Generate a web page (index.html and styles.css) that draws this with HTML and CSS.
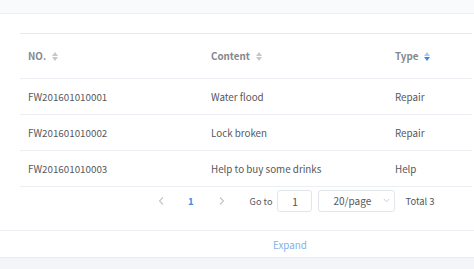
FILE: index.html
```html
<!DOCTYPE html>
<html>
<head>
<meta charset="utf-8">
<link rel="stylesheet" href="styles.css">
</head>
<body>
<div class="topband"></div>
<div class="card">
  <div class="table">
    <div class="row head">
      <div class="cell">NO. <span class="sort"><i class="up"></i><i class="down"></i></span></div>
      <div class="cell">Content <span class="sort"><i class="up"></i><i class="down"></i></span></div>
      <div class="cell">Type <span class="sort active"><i class="up"></i><i class="down"></i></span></div>
    </div>
    <div class="row">
      <div class="cell">FW201601010001</div>
      <div class="cell">Water flood</div>
      <div class="cell">Repair</div>
    </div>
    <div class="row">
      <div class="cell">FW201601010002</div>
      <div class="cell">Lock broken</div>
      <div class="cell">Repair</div>
    </div>
    <div class="row">
      <div class="cell">FW201601010003</div>
      <div class="cell">Help to buy some drinks</div>
      <div class="cell">Help</div>
    </div>
    <div class="pager">
      <span class="arrow">
        <svg width="7" height="10" viewBox="0 0 7 10"><path d="M5 1.5 L1.5 5 L5 8.5" fill="none" stroke="#c0c4cc" stroke-width="1.1"/></svg>
      </span>
      <span class="num">1</span>
      <span class="arrow">
        <svg width="7" height="10" viewBox="0 0 7 10"><path d="M2 1.5 L5.5 5 L2 8.5" fill="none" stroke="#c0c4cc" stroke-width="1.1"/></svg>
      </span>
      <span class="goto">Go to</span>
      <span class="input">1</span>
      <span class="select"><span class="sel-text">20/page</span>
        <svg class="chev" width="7" height="5" viewBox="0 0 7 5"><path d="M0.8 1 L3.5 3.8 L6.2 1" fill="none" stroke="#c0c4cc" stroke-width="0.9"/></svg>
      </span>
      <span class="total">Total 3</span>
    </div>
  </div>
  <div class="footer"><span class="expand">Expand</span></div>
</div>
</body>
</html>
```

FILE: styles.css
```css
* { box-sizing: border-box; }
html, body { margin: 0; padding: 0; }
body {
  width: 474px;
  height: 269px;
  overflow: hidden;
  background: #f3f5f9;
  font-family: "Noto Sans CJK SC", "Noto Sans", sans-serif;
  font-size: 9.8px;
  color: #55585d;
}
.topband {
  height: 14px;
  background: #f9fafb;
  border-bottom: 1px solid #eef0f3;
}
.card {
  background: #fff;
  height: 244px;
  border-bottom: 1px solid #e8ecf3;
}
.table {
  margin-left: 20px;
  margin-right: 2px;
  padding-top: 19px;
}
.row {
  display: grid;
  grid-template-columns: 183px 184px 1fr;
  height: 36px;
  border-bottom: 1px solid #ebeef3;
  align-items: center;
}
.row.head {
  height: 46px;
  border-top: 1px solid #e6e9ee;
  font-weight: 700;
  color: #85888e;
}
.cell {
  padding-left: 8px;
  display: flex;
  align-items: center;
  white-space: nowrap;
}
.sort {
  display: inline-flex;
  flex-direction: column;
  gap: 1px;
  margin-left: 6px;
}
.sort i {
  display: block;
  width: 0;
  height: 0;
  border-left: 3.5px solid transparent;
  border-right: 3.5px solid transparent;
}
.sort .up { border-bottom: 4px solid #c4c7cc; }
.sort .down { border-top: 4px solid #c4c7cc; }
.sort.active .up { border-bottom-color: #a9c9f2; }
.sort.active .down { border-top-color: #3d86e6; }
.pager {
  height: 43px;
  display: flex;
  align-items: center;
  padding-left: 138px;
  padding-bottom: 16px;
}
.arrow {
  width: 7px;
  display: flex;
  align-items: center;
}
.num {
  color: #3a8ee6;
  font-weight: 700;
  margin: 0 24px 0 23px;
  font-size: 9.5px;
}
.goto {
  margin-left: 25px;
  font-size: 9.2px;
}
.input {
  margin-left: 5px;
  width: 35px;
  height: 22px;
  border: 1px solid #e2e5ea;
  border-radius: 3px;
  display: flex;
  align-items: center;
  justify-content: center;
  font-size: 11px;
}
.select {
  margin-left: 6px;
  width: 77px;
  height: 22px;
  border: 1px solid #e2e5ea;
  border-radius: 3px;
  display: flex;
  align-items: center;
  padding-left: 14px;
  font-size: 10px;
}
.chev { margin-left: 12px; flex: none; }
.total {
  margin-left: 10px;
  font-size: 9.4px;
}
.footer {
  border-top: 1px solid #eceff3;
  height: 28px;
  display: flex;
  align-items: center;
  padding-left: 273px;
}
.expand {
  color: #7fb2ee;
}
```
